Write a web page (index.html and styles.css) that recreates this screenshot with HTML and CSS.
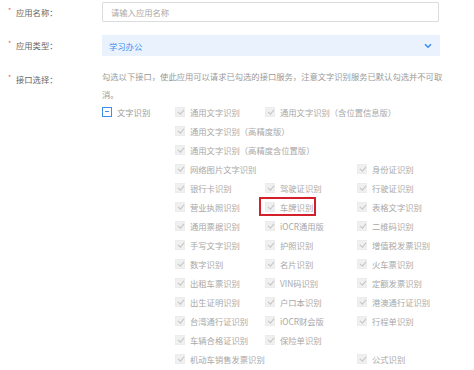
FILE: index.html
```html
<!DOCTYPE html>
<html lang="zh-CN">
<head>
    <meta charset="UTF-8">
    <meta name="viewport" content="width=device-width, initial-scale=1.0">
    <title>创建应用</title>
    <link rel="stylesheet" href="styles.css">
</head>
<body>
    <div class="form">
        <!-- 应用名称 -->
        <div class="form-row">
            <label class="form-label" for="appName"><span class="req">*</span>应用名称：</label>
            <div class="form-field">
                <input class="text-input" type="text" id="appName" placeholder="请输入应用名称">
            </div>
        </div>

        <!-- 应用类型 -->
        <div class="form-row">
            <label class="form-label"><span class="req">*</span>应用类型：</label>
            <div class="form-field">
                <div class="select">
                    <span>学习办公</span>
                    <svg class="chevron" width="8" height="6" viewBox="0 0 8 6">
                        <path d="M1 1.2 L4 4.2 L7 1.2" fill="none" stroke="#3d8ef0" stroke-width="1.6"/>
                    </svg>
                </div>
            </div>
        </div>

        <!-- 接口选择 -->
        <div class="form-row">
            <label class="form-label"><span class="req">*</span>接口选择：</label>
            <div class="form-field">
                <p class="desc">勾选以下接口，使此应用可以请求已勾选的接口服务，注意文字识别服务已默认勾选并不可取消。</p>

                <div class="api-group">
                    <div class="group-head">
                        <span class="box minus"></span>
                        <span>文字识别</span>
                    </div>
                    <div class="api-grid">
                        <div class="api-item"><span class="box checked"></span>通用文字识别</div>
                        <div class="api-item span-2"><span class="box checked"></span>通用文字识别（含位置信息版）</div>
                        <div class="api-item span-3"><span class="box checked"></span>通用文字识别（高精度版）</div>
                        <div class="api-item span-3"><span class="box checked"></span>通用文字识别（高精度含位置版）</div>

                        <div class="api-item"><span class="box checked"></span>网络图片文字识别</div>
                        <div class="api-item"></div>
                        <div class="api-item"><span class="box checked"></span>身份证识别</div>

                        <div class="api-item"><span class="box checked"></span>银行卡识别</div>
                        <div class="api-item"><span class="box checked"></span>驾驶证识别</div>
                        <div class="api-item"><span class="box checked"></span>行驶证识别</div>

                        <div class="api-item"><span class="box checked"></span>营业执照识别</div>
                        <div class="api-item highlight"><span class="box checked"></span>车牌识别</div>
                        <div class="api-item"><span class="box checked"></span>表格文字识别</div>

                        <div class="api-item"><span class="box checked"></span>通用票据识别</div>
                        <div class="api-item"><span class="box checked"></span>iOCR通用版</div>
                        <div class="api-item"><span class="box checked"></span>二维码识别</div>

                        <div class="api-item"><span class="box checked"></span>手写文字识别</div>
                        <div class="api-item"><span class="box checked"></span>护照识别</div>
                        <div class="api-item"><span class="box checked"></span>增值税发票识别</div>

                        <div class="api-item"><span class="box checked"></span>数字识别</div>
                        <div class="api-item"><span class="box checked"></span>名片识别</div>
                        <div class="api-item"><span class="box checked"></span>火车票识别</div>

                        <div class="api-item"><span class="box checked"></span>出租车票识别</div>
                        <div class="api-item"><span class="box checked"></span>VIN码识别</div>
                        <div class="api-item"><span class="box checked"></span>定额发票识别</div>

                        <div class="api-item"><span class="box checked"></span>出生证明识别</div>
                        <div class="api-item"><span class="box checked"></span>户口本识别</div>
                        <div class="api-item"><span class="box checked"></span>港澳通行证识别</div>

                        <div class="api-item"><span class="box checked"></span>台湾通行证识别</div>
                        <div class="api-item"><span class="box checked"></span>iOCR财会版</div>
                        <div class="api-item"><span class="box checked"></span>行程单识别</div>

                        <div class="api-item"><span class="box checked"></span>车辆合格证识别</div>
                        <div class="api-item"><span class="box checked"></span>保险单识别</div>
                        <div class="api-item"></div>

                        <div class="api-item"><span class="box checked"></span>机动车销售发票识别</div>
                        <div class="api-item"></div>
                        <div class="api-item"><span class="box checked"></span>公式识别</div>
                    </div>
                </div>
            </div>
        </div>
    </div>
</body>
</html>
```

FILE: styles.css
```css
body {
    margin: 0;
    background-color: #ffffff;
    font-family: "Noto Sans CJK SC", "Liberation Sans", sans-serif;
    font-size: 8.3px;
    color: #666;
}
.form {
    padding-top: 2px;
    width: 440px;
}
.form-row {
    display: flex;
    align-items: flex-start;
    margin-bottom: 13px;
}
.form-label {
    width: 94px;
    padding-left: 8px;
    flex-shrink: 0;
    line-height: 20px;
    color: #666;
}
.form-label .req {
    display: inline-block;
    width: 8px;
    color: #f0604a;
    font-size: 7px;
    vertical-align: top;
    line-height: 17px;
}
.form-field {
    flex: 1;
}
.text-input {
    display: block;
    box-sizing: border-box;
    width: 337px;
    height: 20px;
    margin: 0;
    padding: 0 8px;
    border: 1px solid #dcdcdc;
    border-radius: 1px;
    font-family: inherit;
    font-size: 8.3px;
    color: #666;
    outline: none;
}
.text-input::placeholder {
    color: #aaa;
}
.select {
    box-sizing: border-box;
    width: 338px;
    height: 21px;
    padding: 0 8px 0 7px;
    background-color: #eaf3fd;
    color: #3d8ef0;
    display: flex;
    align-items: center;
    justify-content: space-between;
}
.chevron {
    display: block;
}
.desc {
    margin: -2px 0 0;
    width: 345px;
    line-height: 18px;
    color: #9a9a9a;
}
.api-group {
    display: flex;
    align-items: flex-start;
    margin-top: -1px;
}
.group-head {
    width: 73px;
    flex-shrink: 0;
    display: flex;
    align-items: center;
    gap: 5px;
    height: 19px;
    color: #999;
}
.api-grid {
    display: grid;
    grid-template-columns: 90px 92px 90px;
    grid-auto-rows: 19px;
}
.api-item {
    display: flex;
    align-items: center;
    gap: 5px;
    white-space: nowrap;
    color: #a8a8a8;
}
.api-item.span-2 {
    grid-column: span 2;
}
.api-item.span-3 {
    grid-column: span 3;
}
.box {
    position: relative;
    display: inline-block;
    box-sizing: border-box;
    width: 10px;
    height: 10px;
    flex-shrink: 0;
}
.box.minus {
    border: 1px solid #3d8ef0;
    background-color: #fff;
}
.box.minus::after {
    content: "";
    position: absolute;
    left: 2px;
    right: 2px;
    top: 3px;
    height: 1.5px;
    background-color: #3d8ef0;
}
.box.checked {
    background-color: #f0f0f0;
    border: 1px solid #ececec;
}
.box.checked::after {
    content: "";
    position: absolute;
    left: 2.5px;
    top: 0.5px;
    width: 2.5px;
    height: 5px;
    border-right: 1.2px solid #c4c4c4;
    border-bottom: 1.2px solid #c4c4c4;
    transform: rotate(40deg);
}
.highlight {
    position: relative;
}
.highlight::after {
    content: "";
    position: absolute;
    left: -6px;
    top: 0;
    width: 57px;
    height: 19px;
    box-sizing: border-box;
    border: 2px solid #d4202a;
}
```
